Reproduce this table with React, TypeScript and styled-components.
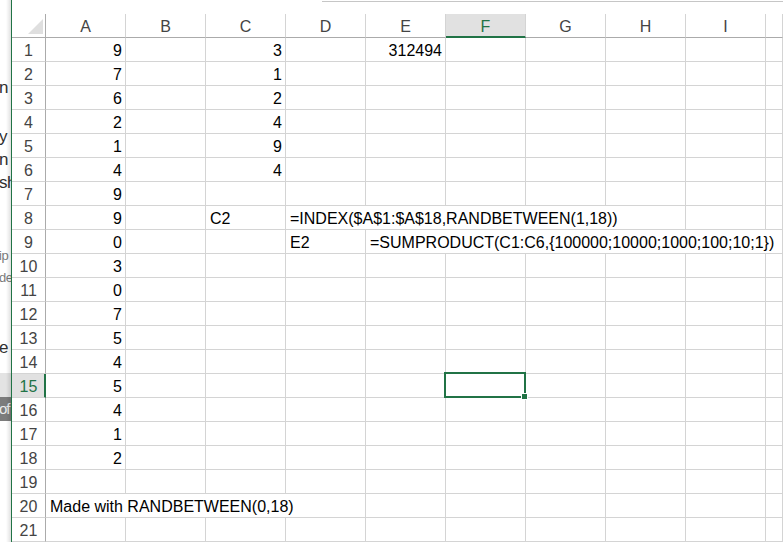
import React from 'react';
import styled, { createGlobalStyle, css } from 'styled-components';

const GRID = '#d4d4d4';
const HEAD_LINE = '#ababab';
const GREEN = '#217346';
const SEL_BG = '#e1e1e1';

const Global = createGlobalStyle`
  html, body { margin: 0; padding: 0; background: #fff; overflow: hidden; }
  body { font-family: "Liberation Sans", Arial, sans-serif; }
`;

const Screen = styled.div`
  display: flex;
  width: 783px;
  height: 542px;
  overflow: hidden;
  background: #fff;
`;

/* ---------- window behind (left strip) ---------- */

const Strip = styled.div`
  width: 11px;
  flex: none;
  border-right: 1px solid ${GREEN};
  display: flex;
  flex-direction: column;
  overflow: hidden;
  position: relative;
  background: #fff;
  &::after {
    content: '';
    position: absolute;
    top: 0;
    bottom: 0;
    right: 0;
    width: 5px;
    background: linear-gradient(to right, rgba(0, 0, 0, 0), rgba(0, 0, 0, 0.12));
    pointer-events: none;
  }
`;

type Tone = 'plain' | 'muted' | 'band' | 'box';

const StripLine = styled.div<{ $h: number; $tone?: Tone; $fill?: boolean }>`
  flex: ${(p) => (p.$fill ? '1' : 'none')};
  height: ${(p) => p.$h}px;
  line-height: ${(p) => p.$h}px;
  white-space: nowrap;
  margin-left: -1px;
  font-size: 17px;
  letter-spacing: -0.5px;
  color: #303030;
  ${(p) =>
    p.$tone === 'muted' &&
    css`
      font-size: 13px;
      color: #7a7a7a;
    `}
  ${(p) =>
    p.$tone === 'band' &&
    css`
      background: #e3e3e3;
    `}
  ${(p) =>
    p.$tone === 'box' &&
    css`
      background: #7c7c7c;
      color: #ededed;
      font-size: 15px;
      letter-spacing: -1px;
    `}
`;

/* ---------- sheet ---------- */

const Sheet = styled.div`
  flex: 1;
  min-width: 0;
  display: flex;
  flex-direction: column;
`;

const TopBar = styled.div`
  height: 14px;
  flex: none;
  padding-left: 310px;
`;

const FormulaEdge = styled.div`
  margin-top: 1px;
  height: 1px;
  background: #c6c6c6;
`;

const Grid = styled.div`
  display: grid;
  grid-template-columns: 34px repeat(9, 80px) 1fr;
  grid-template-rows: repeat(22, 24px);
`;

const Corner = styled.div`
  box-sizing: border-box;
  border-right: 1px solid ${HEAD_LINE};
  border-bottom: 1px solid ${HEAD_LINE};
  display: flex;
  align-items: flex-end;
  justify-content: flex-end;
  padding: 0 2px 3px 0;
`;

const CornerMark = styled.div`
  width: 0;
  height: 0;
  border-left: 15px solid transparent;
  border-bottom: 15px solid #dfdfdf;
`;

const ColHead = styled.div<{ $active?: boolean }>`
  box-sizing: border-box;
  border-right: 1px solid ${GRID};
  border-bottom: 1px solid ${HEAD_LINE};
  display: flex;
  align-items: flex-end;
  justify-content: center;
  padding-bottom: 1px;
  font-size: 16px;
  line-height: 18px;
  color: #444;
  ${(p) =>
    p.$active &&
    css`
      background: ${SEL_BG};
      color: ${GREEN};
      border-bottom: 2px solid ${GREEN};
      padding-bottom: 0;
    `}
`;

const RowHead = styled.div<{ $active?: boolean }>`
  box-sizing: border-box;
  border-right: 1px solid ${HEAD_LINE};
  border-bottom: 1px solid ${GRID};
  display: flex;
  align-items: flex-end;
  justify-content: center;
  padding: 0 0 1px 0;
  font-size: 16px;
  line-height: 18px;
  color: #444;
  ${(p) =>
    p.$active &&
    css`
      background: ${SEL_BG};
      color: ${GREEN};
      border-right: 2px solid ${GREEN};
      padding-left: 1px;
    `}
`;

const Cell = styled.div<{ $align?: 'left' | 'right'; $span?: number; $selected?: boolean }>`
  box-sizing: border-box;
  position: relative;
  grid-column: span ${(p) => p.$span ?? 1};
  border-right: 1px solid ${GRID};
  border-bottom: 1px solid ${GRID};
  display: flex;
  align-items: flex-end;
  justify-content: ${(p) => (p.$align === 'right' ? 'flex-end' : 'flex-start')};
  padding: 0 3px 1px 4px;
  font-size: 16px;
  line-height: 18px;
  color: #000;
  white-space: nowrap;
  overflow: visible;
  min-width: 0;
  ${(p) =>
    p.$selected &&
    css`
      z-index: 2;
      &::after {
        content: '';
        position: absolute;
        left: -2px;
        top: -2px;
        right: -1px;
        bottom: -1px;
        border: 2px solid ${GREEN};
        pointer-events: none;
      }
      &::before {
        content: '';
        position: absolute;
        right: -3px;
        bottom: -3px;
        width: 7px;
        height: 7px;
        box-sizing: border-box;
        background: ${GREEN};
        border: 1px solid #fff;
        z-index: 3;
      }
    `}
`;

/* ---------- data ---------- */

const COLS = ['A', 'B', 'C', 'D', 'E', 'F', 'G', 'H', 'I', ''];
const ACTIVE_COL = 5;
const ACTIVE_ROW = 15;

type Entry = { text: string; align: 'left' | 'right'; span?: number };

const colA = [9, 7, 6, 2, 1, 4, 9, 9, 0, 3, 0, 7, 5, 4, 5, 4, 1, 2];
const colC = [3, 1, 2, 4, 9, 4];

const data: Record<number, Record<number, Entry>> = {};
const put = (r: number, c: number, e: Entry) => {
  data[r] = data[r] || {};
  data[r][c] = e;
};
colA.forEach((v, i) => put(i + 1, 0, { text: String(v), align: 'right' }));
colC.forEach((v, i) => put(i + 1, 2, { text: String(v), align: 'right' }));
put(1, 4, { text: '312494', align: 'right' });
put(8, 2, { text: 'C2', align: 'left' });
put(8, 3, { text: '=INDEX($A$1:$A$18,RANDBETWEEN(1,18))', align: 'left', span: 5 });
put(9, 3, { text: 'E2', align: 'left' });
put(9, 4, { text: '=SUMPRODUCT(C1:C6,{100000;10000;1000;100;10;1})', align: 'left', span: 6 });
put(20, 0, { text: 'Made with RANDBETWEEN(0,18)', align: 'left', span: 4 });

const rowCells = (r: number) => {
  const out: React.ReactNode[] = [];
  let c = 0;
  while (c < COLS.length) {
    const e = data[r]?.[c];
    const span = e?.span ?? 1;
    out.push(
      <Cell
        key={`${r}-${c}`}
        $align={e?.align}
        $span={span}
        $selected={r === ACTIVE_ROW && c === ACTIVE_COL}
      >
        {e?.text}
      </Cell>
    );
    c += span;
  }
  return out;
};

const rows = Array.from({ length: 21 }, (_, i) => i + 1);

export default function App() {
  return (
    <>
      <Global />
      <Screen>
        <Strip>
          <StripLine $h={76} />
          <StripLine $h={24}>n</StripLine>
          <StripLine $h={25} />
          <StripLine $h={23}>y</StripLine>
          <StripLine $h={23}>n</StripLine>
          <StripLine $h={23}>sh</StripLine>
          <StripLine $h={51} />
          <StripLine $h={22} $tone="muted">ip</StripLine>
          <StripLine $h={22} $tone="muted">de</StripLine>
          <StripLine $h={47} />
          <StripLine $h={24}>e</StripLine>
          <StripLine $h={13} />
          <StripLine $h={24} $tone="band" />
          <StripLine $h={24} $tone="box">of</StripLine>
          <StripLine $h={0} $fill />
        </Strip>
        <Sheet>
          <TopBar>
            <FormulaEdge />
          </TopBar>
          <Grid>
            <Corner>
              <CornerMark />
            </Corner>
            {COLS.map((c, i) => (
              <ColHead key={`h${i}`} $active={i === ACTIVE_COL}>
                {c}
              </ColHead>
            ))}
            {rows.map((r) => (
              <React.Fragment key={r}>
                <RowHead $active={r === ACTIVE_ROW}>{r}</RowHead>
                {rowCells(r)}
              </React.Fragment>
            ))}
          </Grid>
        </Sheet>
      </Screen>
    </>
  );
}
